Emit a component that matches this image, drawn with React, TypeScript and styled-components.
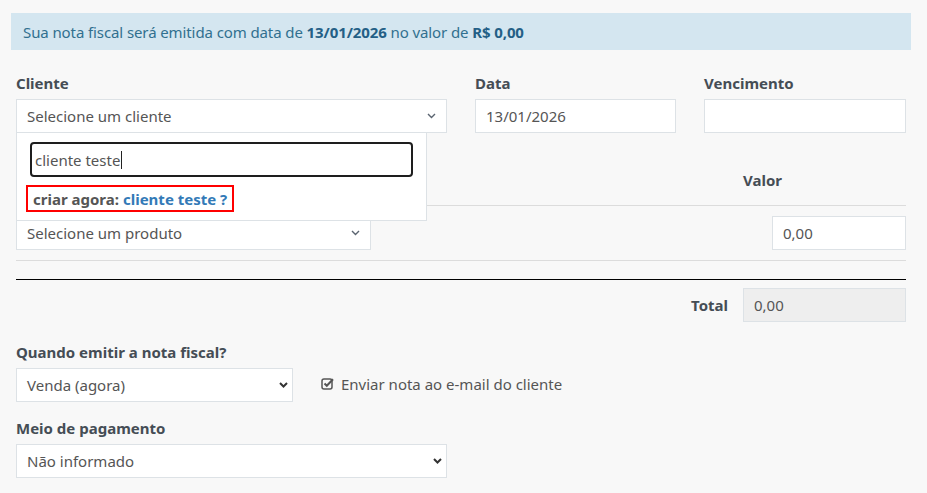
import React from "react";
import styled, { createGlobalStyle } from "styled-components";

const Global = createGlobalStyle`
  html, body { margin: 0; padding: 0; background: #f8f8f8; }
  body { font-family: "Noto Sans", "Open Sans", sans-serif; font-size: 15px; color: #555; }
  * { box-sizing: border-box; }
`;

const Page = styled.div`
  padding: 13px 16px 0 11px;
  width: 927px;
`;

const Alert = styled.div`
  background: #d4e6f0;
  color: #31708f;
  height: 37px;
  display: flex;
  align-items: center;
  padding: 0 12px;
  font-size: 15px;
  letter-spacing: -0.1px;
  b { color: #245f86; font-weight: 700; }
`;

const Form = styled.div`
  padding: 0 5px;
  display: flex;
  flex-direction: column;
`;

const TopRow = styled.div`
  display: grid;
  grid-template-columns: 431px 201px 202px;
  column-gap: 28px;
  margin-top: 23px;
`;

const Field = styled.div`
  position: relative;
  display: flex;
  flex-direction: column;
`;

const Label = styled.label`
  font-weight: 700;
  color: #454d55;
  font-size: 15px;
  line-height: 21px;
  margin-bottom: 5px;
`;

const Input = styled.div<{ $disabled?: boolean; $w?: number }>`
  height: 34px;
  width: ${(p) => (p.$w ? `${p.$w}px` : "100%")};
  background: ${(p) => (p.$disabled ? "#eeeeee" : "#fff")};
  border: 1px solid #dde2e6;
  display: flex;
  align-items: center;
  padding: 0 10px;
  color: #555;
  font-size: 15px;
  font-weight: 400;
`;

const Select = styled(Input)<{ $native?: boolean }>`
  justify-content: space-between;
  padding-right: ${(p) => (p.$native ? "4px" : "10px")};
`;

const Chevron = ({ bold }: { bold?: boolean }) => (
  <svg width="9" height="6" viewBox="0 0 9 6">
    <path
      d="M1 1 L4.5 4.5 L8 1"
      fill="none"
      stroke={bold ? "#333" : "#5a6470"}
      strokeWidth={bold ? 2 : 1.4}
    />
  </svg>
);

const Dropdown = styled.div`
  position: absolute;
  top: 60px;
  left: 0;
  width: 411px;
  height: 88px;
  background: #fff;
  border: 1px solid #dde2e6;
  border-top: none;
  z-index: 5;
  padding: 9px 13px 0 9px;
`;

const Search = styled.div`
  margin-left: 4px;
  height: 35px;
  border: 2px solid #1e1e1e;
  border-radius: 4px;
  display: flex;
  align-items: center;
  padding: 0 3px;
  color: #555;
`;

const Caret = styled.span`
  display: inline-block;
  width: 1px;
  height: 18px;
  background: #222;
  margin-left: 1px;
`;

const CreateOption = styled.div`
  margin-top: 8px;
  display: inline-flex;
  align-items: center;
  height: 27px;
  border: 2px solid #ff0000;
  padding: 0 5px;
  font-weight: 700;
  color: #555;
  span { color: #337ab7; margin-left: 4px; }
`;

const Table = styled.div`
  margin-top: 37px;
  display: flex;
  flex-direction: column;
`;

const HeadRow = styled.div`
  display: grid;
  grid-template-columns: 1fr 163px;
  height: 36px;
  border-bottom: 1px solid #dcdcdc;
  font-weight: 700;
  color: #454d55;
  align-items: center;
  padding-bottom: 16px;
  line-height: 21px;
`;

const BodyRow = styled.div`
  display: flex;
  justify-content: space-between;
  padding: 10px 0;
  border-bottom: 1px solid #dcdcdc;
`;

const Divider = styled.div`
  margin-top: 18px;
  height: 1px;
  background: #000;
`;

const TotalRow = styled.div`
  margin-top: 8px;
  display: flex;
  justify-content: flex-end;
  align-items: center;
  gap: 15px;
  font-weight: 700;
  color: #454d55;
`;

const Block = styled.div<{ $gap: number }>`
  margin-top: ${(p) => p.$gap}px;
  display: flex;
  flex-direction: column;
`;

const InlineRow = styled.div`
  display: flex;
  align-items: center;
  gap: 28px;
`;

const Check = styled.div`
  display: flex;
  align-items: center;
  gap: 7px;
  color: #555;
  margin-top: -3px;
`;

const CheckIcon = () => (
  <svg width="13" height="13" viewBox="0 0 13 13">
    <rect x="1" y="2" width="10" height="10" rx="2" fill="none" stroke="#555" strokeWidth="1.5" />
    <path d="M3.5 6.5 L5.8 8.8 L12 2.2" fill="none" stroke="#555" strokeWidth="2" />
  </svg>
);

export default function App() {
  return (
    <Page>
      <Global />
      <Alert>
        Sua nota fiscal será emitida com data de&nbsp;<b>13/01/2026</b>&nbsp;no valor de&nbsp;<b>R$ 0,00</b>
      </Alert>
      <Form>
        <TopRow>
          <Field>
            <Label>Cliente</Label>
            <Select>
              Selecione um cliente
              <Chevron />
            </Select>
            <Dropdown>
              <Search>
                cliente teste<Caret />
              </Search>
              <CreateOption>
                criar agora:<span>cliente teste ?</span>
              </CreateOption>
            </Dropdown>
          </Field>
          <Field>
            <Label>Data</Label>
            <Input>13/01/2026</Input>
          </Field>
          <Field>
            <Label>Vencimento</Label>
            <Input />
          </Field>
        </TopRow>

        <Table>
          <HeadRow>
            <div>Produto</div>
            <div>Valor</div>
          </HeadRow>
          <BodyRow>
            <Select $w={355}>
              Selecione um produto
              <Chevron />
            </Select>
            <Input $w={134}>0,00</Input>
          </BodyRow>
        </Table>

        <Divider />

        <TotalRow>
          Total
          <Input $w={163} $disabled>0,00</Input>
        </TotalRow>

        <Block $gap={20}>
          <Label>Quando emitir a nota fiscal?</Label>
          <InlineRow>
            <Select $w={277} $native>
              Venda (agora)
              <Chevron bold />
            </Select>
            <Check>
              <CheckIcon />
              Enviar nota ao e-mail do cliente
            </Check>
          </InlineRow>
        </Block>

        <Block $gap={16}>
          <Label>Meio de pagamento</Label>
          <Select $w={431} $native>
            Não informado
            <Chevron bold />
          </Select>
        </Block>
      </Form>
    </Page>
  );
}
